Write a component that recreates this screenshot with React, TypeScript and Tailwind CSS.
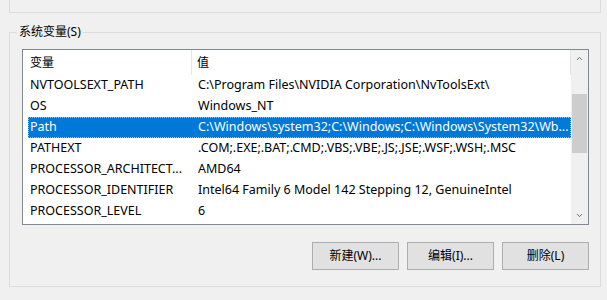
import { ChevronUp, ChevronDown } from "lucide-react"

const rows = [
    { name: "NVTOOLSEXT_PATH", value: "C:\\Program Files\\NVIDIA Corporation\\NvToolsExt\\" },
    { name: "OS", value: "Windows_NT" },
    { name: "Path", value: "C:\\Windows\\system32;C:\\Windows;C:\\Windows\\System32\\Wb...", selected: true },
    { name: "PATHEXT", value: ".COM;.EXE;.BAT;.CMD;.VBS;.VBE;.JS;.JSE;.WSF;.WSH;.MSC" },
    { name: "PROCESSOR_ARCHITECT...", value: "AMD64" },
    { name: "PROCESSOR_IDENTIFIER", value: "Intel64 Family 6 Model 142 Stepping 12, GenuineIntel" },
    { name: "PROCESSOR_LEVEL", value: "6" },
]

function WinButton({ label }: { label: string }) {
    return (
        <button className="w-[87px] h-[28px] bg-[#e1e1e1] border border-[#adadad] text-[12px] text-black leading-none">
            {label}
        </button>
    )
}

export default function App() {
    return (
        <div
            className="w-[607px] h-[300px] bg-[#f0f0f0] pl-[9px] pr-[6px] text-[12px] text-black overflow-hidden"
            style={{ fontFamily: '"Noto Sans", "Noto Sans CJK SC", sans-serif' }}
        >
            {/* bottom of the user variables group above */}
            <div className="h-[13px] border-x border-b border-[#dcdcdc]" />

            <div className="relative mt-[19px] h-[255px] border border-[#dcdcdc] pt-[16px] pl-[12px] pr-[11px]">
                <span className="absolute -top-[9px] left-[7px] px-[2px] bg-[#f0f0f0] leading-[16px]">
                    系统变量(S)
                </span>

                {/* list view */}
                <div className="h-[176px] border border-[#828790] bg-white flex overflow-hidden">
                    <div className="flex-1 min-w-0 flex flex-col text-[12.5px]">
                        <div className="h-[25px] shrink-0 flex items-center text-[12px]">
                            <div className="w-[169px] h-full pl-[7px] flex items-center border-r border-[#e5e5e5]">
                                变量
                            </div>
                            <div className="flex-1 h-full pl-[5px] flex items-center border-r border-[#e5e5e5]">
                                值
                            </div>
                        </div>
                        <div className="flex flex-col pl-[5px]">
                            {rows.map((r) => (
                                <div
                                    key={r.name}
                                    className={
                                        r.selected
                                            ? "h-[21px] shrink-0 flex items-center bg-[#0078d7] text-white outline-1 outline-dotted outline-[#8cc1ef] -outline-offset-1"
                                            : "h-[21px] shrink-0 flex items-center"
                                    }
                                >
                                    <div className="w-[168px] pl-[2px] whitespace-nowrap overflow-hidden">{r.name}</div>
                                    <div className="flex-1 min-w-0 pl-[2px] whitespace-nowrap overflow-hidden">{r.value}</div>
                                </div>
                            ))}
                        </div>
                    </div>

                    {/* scrollbar */}
                    <div className="w-[17px] shrink-0 bg-[#f0f0f0] flex flex-col items-center">
                        <div className="h-[17px] w-full flex items-center justify-center">
                            <ChevronUp className="size-[9px] text-[#606060]" strokeWidth={2.5} />
                        </div>
                        <div className="flex-1 w-full flex flex-col px-[1px]">
                            <div className="h-[27px]" />
                            <div className="h-[59px] bg-[#cdcdcd]" />
                        </div>
                        <div className="h-[17px] w-full flex items-center justify-center">
                            <ChevronDown className="size-[9px] text-[#606060]" strokeWidth={2.5} />
                        </div>
                    </div>
                </div>

                <div className="mt-[17px] flex justify-end gap-[8px]">
                    <WinButton label="新建(W)..." />
                    <WinButton label="编辑(I)..." />
                    <WinButton label="删除(L)" />
                </div>
            </div>
        </div>
    )
}
